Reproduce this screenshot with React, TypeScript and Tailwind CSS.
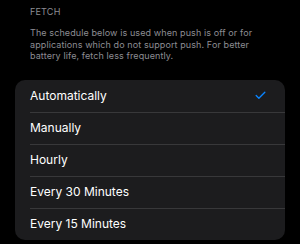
import { Check } from "lucide-react"

const options = ["Automatically", "Manually", "Hourly", "Every 30 Minutes", "Every 15 Minutes"]

export default function App() {
  const selected = "Automatically"

  return (
    <div className="w-[300px] h-[244px] bg-black overflow-hidden font-['Inter',sans-serif]">
      <div className="px-[30px] pt-[6px]">
        <div className="text-[9px] leading-[12px] text-[#8d8d93] tracking-[0.2px]">FETCH</div>
        <p className="mt-[9px] text-[9px] leading-[11.5px] text-[#8d8d93] tracking-[0.1px]">
          The schedule below is used when push is off or for applications which do not support push. For better
          battery life, fetch less frequently.
        </p>
      </div>
      <div className="mx-[15px] mt-[18px] rounded-[10px] bg-[#1c1c1e] overflow-hidden">
        {options.map((opt, i) => (
          <div key={opt} className="pl-[15px]">
            <div
              className={`h-[32px] flex items-center justify-between pr-[18px] ${
                i > 0 ? "border-t border-[#38383a]" : ""
              }`}
            >
              <span className="text-[12px] text-white">{opt}</span>
              {opt === selected && <Check className="w-[13px] h-[13px] text-[#0a84ff]" strokeWidth={2.5} />}
            </div>
          </div>
        ))}
      </div>
    </div>
  )
}
